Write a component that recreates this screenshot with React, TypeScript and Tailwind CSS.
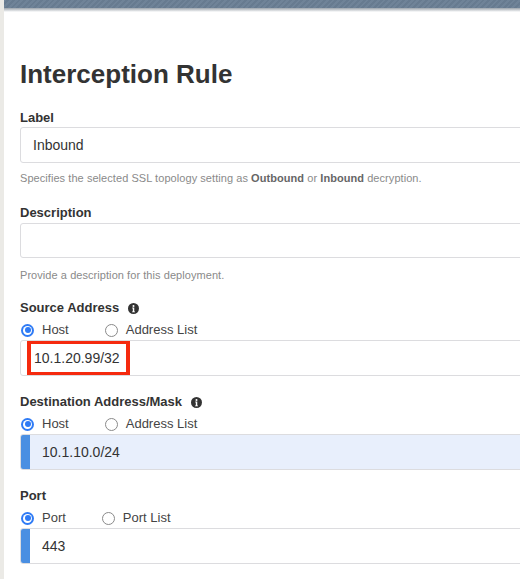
import React from 'react';

const font = { fontFamily: '"Liberation Sans", Arial, Helvetica, sans-serif' };

function InfoIcon() {
  return (
    <svg width="11" height="11" viewBox="0 0 16 16" className="ml-[9px]">
      <circle cx="8" cy="8" r="8" fill="#333" />
      <circle cx="8" cy="4.3" r="1.5" fill="#fff" />
      <path d="M6.2 6.6h2.9v5.6h1.1v1.4H5.9v-1.4h1.1V8h-.8z" fill="#fff" />
    </svg>
  );
}

function Radio({ checked, label, gap }: { checked?: boolean; label: string; gap?: boolean }) {
  return (
    <div className={`flex items-center ${gap ? 'mr-[36px]' : ''}`}>
      {checked ? (
        <span className="w-[13px] h-[13px] rounded-full bg-[#2f7bf5] flex items-center justify-center">
          <span className="w-[9px] h-[9px] rounded-full bg-white flex items-center justify-center">
            <span className="w-[6px] h-[6px] rounded-full bg-[#2f7bf5]" />
          </span>
        </span>
      ) : (
        <span className="w-[13px] h-[13px] rounded-full border border-[#8a8a8a] bg-white" />
      )}
      <span className="ml-[8px] text-[13px] leading-[16px] text-[#444]">{label}</span>
    </div>
  );
}

function FieldLabel({ children, info }: { children: React.ReactNode; info?: boolean }) {
  return (
    <div className="flex items-center h-[16px] text-[13px] leading-[16px] font-bold text-[#333]">
      {children}
      {info && <InfoIcon />}
    </div>
  );
}

function BarInput({ value, blue }: { value: string; blue?: boolean }) {
  return (
    <div
      className={`flex items-center h-[36px] w-[520px] border border-[#dcdcdf] rounded-[3px] overflow-hidden ${
        blue ? 'bg-[#e8effc]' : 'bg-white'
      }`}
    >
      <div className="w-[9px] h-full bg-[#4a8fe2]" />
      <span className="ml-[12px] text-[14px] text-[#333]">{value}</span>
    </div>
  );
}

export default function App() {
  return (
    <div className="w-[520px] h-[579px] overflow-hidden flex bg-white" style={font}>
      <div className="w-[4px] shrink-0 bg-[#ebeae6]" />
      <div className="flex-1 min-w-0 flex flex-col">
        <div className="h-[8px] bg-[#6f8398] bg-[repeating-linear-gradient(135deg,#6f8398_0px,#6f8398_2px,#677b90_2px,#677b90_4px)]" />
        <div className="h-[4px] bg-gradient-to-b from-[#9da5ad] to-white" />

        <div className="pl-[16px]">
          <h1 className="mt-[47px] h-[30px] text-[26px] leading-[30px] font-bold text-[#333]">
            Interception Rule
          </h1>

          <div className="mt-[21px]">
            <FieldLabel>Label</FieldLabel>
            <div className="mt-[1px] flex items-center h-[36px] w-[520px] border border-[#dcdcdf] rounded-[3px] pl-[12px] text-[14px] text-[#333]">
              Inbound
            </div>
            <p className="mt-[8px] h-[14px] text-[11px] leading-[14px] tracking-[0.06px] text-[#8a8a8a]">
              Specifies the selected SSL topology setting as <b className="text-[#666]">Outbound</b> or{' '}
              <b className="text-[#666]">Inbound</b> decryption.
            </p>
          </div>

          <div className="mt-[20px]">
            <FieldLabel>Description</FieldLabel>
            <div className="mt-[2px] h-[35px] w-[520px] border border-[#dcdcdf] rounded-[3px]" />
            <p className="mt-[10px] h-[14px] text-[11px] leading-[14px] tracking-[0.06px] text-[#8a8a8a]">
              Provide a description for this deployment.
            </p>
          </div>

          <div className="mt-[18px]">
            <FieldLabel info>Source Address</FieldLabel>
            <div className="mt-[6px] h-[16px] flex items-center pl-[1px]">
              <Radio checked label="Host" gap />
              <Radio label="Address List" />
            </div>
            <div className="mt-[2px] flex items-center h-[36px] w-[520px] border border-[#dcdcdf] rounded-[3px]">
              <span className="ml-[6px] h-[34px] flex items-center border-x-[4px] border-y-[3px] border-[#f52a0e] pl-[3px] pr-[6px] text-[14px] text-[#333]">
                10.1.20.99/32
              </span>
            </div>
          </div>

          <div className="mt-[18px]">
            <FieldLabel info>Destination Address/Mask</FieldLabel>
            <div className="mt-[6px] h-[16px] flex items-center pl-[1px]">
              <Radio checked label="Host" gap />
              <Radio label="Address List" />
            </div>
            <div className="mt-[2px]">
              <BarInput value="10.1.10.0/24" blue />
            </div>
          </div>

          <div className="mt-[18px]">
            <FieldLabel>Port</FieldLabel>
            <div className="mt-[6px] h-[16px] flex items-center pl-[1px]">
              <Radio checked label="Port" gap />
              <Radio label="Port List" />
            </div>
            <div className="mt-[2px]">
              <BarInput value="443" />
            </div>
          </div>
        </div>
      </div>
    </div>
  );
}
